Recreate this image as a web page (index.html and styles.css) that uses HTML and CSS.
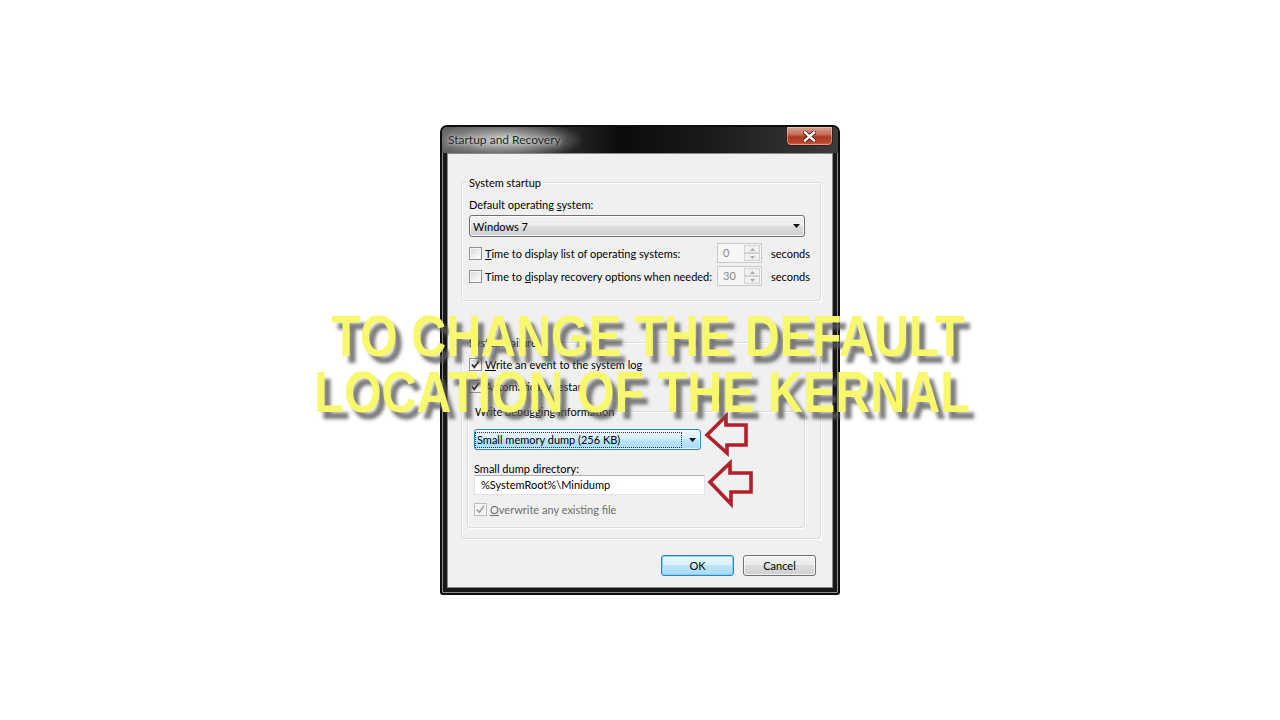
FILE: index.html
```html
<!DOCTYPE html>
<html>
<head>
<meta charset="utf-8">
<title>Startup and Recovery</title>
<link rel="stylesheet" href="styles.css">
</head>
<body>
<div class="window">
  <div class="titlebar">
    <div class="title">Startup and Recovery</div>
    <div class="close">
      <svg width="13" height="11" viewBox="0 0 13 11"><path d="M2 1.5 L11 9.5 M11 1.5 L2 9.5" stroke="#4a1a12" stroke-width="4.2" stroke-linecap="square"/><path d="M2 1.5 L11 9.5 M11 1.5 L2 9.5" stroke="#ffffff" stroke-width="2.4" stroke-linecap="square"/></svg>
    </div>
  </div>
  <div class="client">
    <div class="group g-startup">
      <div class="group-title">System startup</div>
      <div class="label lbl-default">Default operating <u>s</u>ystem:</div>
      <div class="combo combo-os">
        <span class="combo-text">Windows 7</span>
        <svg class="drop" width="7" height="4" viewBox="0 0 7 4"><polygon points="0,0 7,0 3.5,4" fill="#111"/></svg>
      </div>
      <div class="row row1">
        <div class="check-label"><span class="cb"></span><span><u>T</u>ime to display list of operating systems:</span></div>
        <div class="spin"><span class="spin-val">0</span><span class="spin-btns"><span class="sb"><svg width="5" height="3" viewBox="0 0 5 3"><polygon points="0,3 5,3 2.5,0" fill="#a9a9a9"/></svg></span><span class="sb"><svg width="5" height="3" viewBox="0 0 5 3"><polygon points="0,0 5,0 2.5,3" fill="#a9a9a9"/></svg></span></span></div>
        <span class="unit">seconds</span>
      </div>
      <div class="row row2">
        <div class="check-label"><span class="cb"></span><span>Time to <u>d</u>isplay recovery options when needed:</span></div>
        <div class="spin"><span class="spin-val">30</span><span class="spin-btns"><span class="sb"><svg width="5" height="3" viewBox="0 0 5 3"><polygon points="0,3 5,3 2.5,0" fill="#a9a9a9"/></svg></span><span class="sb"><svg width="5" height="3" viewBox="0 0 5 3"><polygon points="0,0 5,0 2.5,3" fill="#a9a9a9"/></svg></span></span></div>
        <span class="unit">seconds</span>
      </div>
    </div>

    <div class="group g-failure">
      <div class="group-title">System failure</div>
      <div class="check-row r-write"><span class="cb"><svg width="11" height="11" viewBox="0 0 11 11"><path d="M2 5.5 L4.3 8.3 L9 2" fill="none" stroke="#2b2b2b" stroke-width="1.7"/></svg></span><span><u>W</u>rite an event to the system log</span></div>
      <div class="check-row r-restart"><span class="cb"><svg width="11" height="11" viewBox="0 0 11 11"><path d="M2 5.5 L4.3 8.3 L9 2" fill="none" stroke="#2b2b2b" stroke-width="1.7"/></svg></span><span>Automatically <u>r</u>estart</span></div>
      <div class="group inner">
        <div class="group-title">Write debugging information</div>
        <div class="combo combo-focus">
          <span class="combo-text focus-rect">Small memory dump (256 KB)</span>
          <svg class="drop" width="7" height="4" viewBox="0 0 7 4"><polygon points="0,0 7,0 3.5,4" fill="#111"/></svg>
        </div>
        <div class="label lbl-dir">Small dump directory:</div>
        <div class="textbox">%SystemRoot%\Minidump</div>
        <div class="check-row r-over disabled"><span class="cb cb-dis"><svg width="11" height="11" viewBox="0 0 11 11"><path d="M2 5.5 L4.3 8.3 L9 2" fill="none" stroke="#a3a3a3" stroke-width="1.7"/></svg></span><span><u>O</u>verwrite any existing file</span></div>
      </div>
    </div>

    <div class="buttons">
      <button class="btn btn-default">OK</button>
      <button class="btn">Cancel</button>
    </div>
  </div>
</div>

<svg class="arrows" width="70" height="110" viewBox="695 405 70 110">
  <polygon points="707,435 726,416 726,425 746,425 746,445 727,445 727,453" fill="none" stroke="#b3202b" stroke-width="3.6" stroke-linejoin="miter"/>
  <polygon points="710,482 730,463 730,473 751,473 751,492 731,492 731,504" fill="none" stroke="#b3202b" stroke-width="3.6" stroke-linejoin="miter"/>
</svg>

<div class="caption">
  <div class="cap-line l1">TO CHANGE THE DEFAULT</div>
  <div class="cap-line l2">LOCATION OF THE KERNAL</div>
</div>
</body>
</html>
```

FILE: styles.css
```css
html, body {
  margin: 0;
  padding: 0;
}
body {
  width: 1280px;
  height: 720px;
  background: #ffffff;
  position: relative;
  overflow: hidden;
  display: flex;
  align-items: center;
  justify-content: center;
  font-family: "Lato", "Liberation Sans", sans-serif;
  font-size: 11px;
  color: #000;
}

/* window frame */
.window {
  width: 400px;
  height: 470px;
  box-sizing: border-box;
  border: 2px solid #0d0d0d;
  border-radius: 7px 7px 3px 3px;
  background: #171717;
  box-shadow: inset 0 0 0 1px #8d8d8d;
  padding: 0 5px 5px;
  display: flex;
  flex-direction: column;
}
.titlebar {
  height: 26px;
  margin: 0 -5px;
  padding: 0 5px;
  display: flex;
  justify-content: space-between;
  align-items: flex-start;
  border-radius: 5px 5px 0 0;
  background:
    radial-gradient(ellipse 80px 20px at 62px 13px, rgba(215,215,215,0.95), rgba(150,150,150,0.55) 65%, rgba(120,120,120,0) 100%),
    linear-gradient(90deg, #5a5a5a 0, #2a2a2a 30%, #0b0b0b 45%, #1c1c1c 70%, #3c3c3c 100%);
}
.title {
  padding-left: 1px;
  line-height: 26px;
  font-size: 12px;
  color: #262626;
  text-shadow: 0 0 6px #e0e0e0, 0 0 3px #d0d0d0;
}
.close {
  width: 47px;
  height: 19px;
  box-sizing: border-box;
  border: 1px solid #3b1a14;
  border-top: none;
  border-radius: 0 0 5px 5px;
  background: linear-gradient(#d9a293 0%, #c8705d 40%, #ad3b24 55%, #b9452b 85%, #cf6a4c 100%);
  box-shadow: inset 0 0 0 1px rgba(255,220,210,0.45);
  display: flex;
  align-items: center;
  justify-content: center;
}

/* client area */
.client {
  flex: 1;
  border: 1px solid #8a8a8a;
  background: #f0f0f0;
  display: flex;
  flex-direction: column;
}

.group {
  border: 1px solid #d5dfe5;
  border-radius: 3px;
  box-shadow: inset 1px 1px 0 #ffffff, 1px 1px 0 #ffffff;
}
.group-title {
  width: fit-content;
  margin: -8px 0 0 -2px;
  padding: 0 2px;
  line-height: 15px;
  background: #f0f0f0;
  white-space: nowrap;
}
.g-startup {
  margin: 28px 11px 0 13px;
  padding: 0 15px 14px 7px;
}
.g-failure {
  margin: 41px 11px 0 13px;
  padding: 0 15px 10px 7px;
}
.inner {
  margin: 17px 0 0 -2px;
  padding: 0 6px 10px 6px;
}
.inner .group-title {
  margin-left: -1px;
}

.label {
  line-height: 15px;
  white-space: nowrap;
}
.lbl-default { margin-top: 7px; }
.lbl-dir { margin-top: 12px; line-height: 13px; }

/* combo boxes */
.combo {
  box-sizing: border-box;
  display: flex;
  align-items: center;
  border: 1px solid #707070;
  border-radius: 3px;
  background: linear-gradient(#f2f2f2 0%, #ebebeb 50%, #dddddd 50%, #cfcfcf 100%);
  box-shadow: inset 0 0 0 1px rgba(255,255,255,0.75);
}
.combo-os {
  margin-top: 3px;
  height: 22px;
  padding-left: 3px;
}
.combo-focus {
  margin-top: 10px;
  width: 227px;
  height: 21px;
  padding-left: 1px;
  border-color: #3c7fb1;
  background: linear-gradient(#eaf6fd 0%, #d9f0fc 50%, #bee6fd 50%, #a7d9f5 100%);
}
.combo-text {
  white-space: nowrap;
  line-height: 15px;
}
.focus-rect {
  width: 204px;
  padding-left: 1px;
  outline: 1px dotted #333;
  outline-offset: 0;
  line-height: 14px;
}
.drop {
  margin-left: auto;
  margin-right: 4px;
}

/* rows with checkboxes */
.row {
  display: flex;
  align-items: center;
  height: 20px;
  white-space: nowrap;
}
.row1 { margin-top: 6px; }
.row2 { margin-top: 3px; }
.check-label {
  width: 248px;
  flex: none;
  display: flex;
  align-items: center;
  gap: 3px;
}
.check-row {
  display: flex;
  align-items: center;
  gap: 3px;
  height: 15px;
  white-space: nowrap;
}
.r-write { margin-top: 7px; }
.r-restart { margin-top: 7px; }
.r-over { margin-top: 7px; }
.disabled { color: #6d6d6d; }

.cb {
  width: 13px;
  height: 13px;
  box-sizing: border-box;
  flex: none;
  border: 1px solid #8e8f8f;
  background: linear-gradient(135deg, #d4d4d4 0%, #f2f2f2 60%, #ffffff 100%);
  box-shadow: inset 0 0 0 1px #f6f6f6;
  display: flex;
  align-items: center;
  justify-content: center;
}
.cb-dis {
  border-color: #bcbcbc;
  background: #f4f4f4;
}

/* spinners */
.spin {
  width: 45px;
  height: 20px;
  box-sizing: border-box;
  flex: none;
  border: 1px solid #c9c9c9;
  background: #f6f6f6;
  display: flex;
  align-items: stretch;
}
.spin-val {
  flex: 1;
  padding-left: 5px;
  line-height: 18px;
  color: #8a8a8a;
}
.spin-btns {
  width: 16px;
  display: flex;
  flex-direction: column;
  padding: 1px 1px 1px 0;
}
.sb {
  flex: 1;
  border: 1px solid #d2d2d2;
  background: #f0f0f0;
  display: flex;
  align-items: center;
  justify-content: center;
}
.unit {
  margin-left: 9px;
}

/* text box */
.textbox {
  width: 231px;
  height: 20px;
  box-sizing: border-box;
  border: 1px solid #e2e3ea;
  border-top-color: #abadb3;
  background: #ffffff;
  padding-left: 6px;
  line-height: 18px;
  white-space: nowrap;
}

/* buttons */
.buttons {
  margin-top: 16px;
  padding-right: 16px;
  display: flex;
  justify-content: flex-end;
  gap: 9px;
}
.btn {
  width: 73px;
  height: 21px;
  padding: 0;
  border: 1px solid #707070;
  border-radius: 3px;
  background: linear-gradient(#f2f2f2 0%, #ebebeb 50%, #dddddd 50%, #cfcfcf 100%);
  box-shadow: inset 0 0 0 1px rgba(255,255,255,0.75);
  font-family: "Lato", "Liberation Sans", sans-serif;
  font-size: 11px;
  color: #000;
}
.btn-default {
  border-color: #3c7fb1;
  background: linear-gradient(#eaf6fd 0%, #d9f0fc 50%, #bee6fd 50%, #a7d9f5 100%);
  box-shadow: inset 0 0 0 1px #7dd6f6;
}

/* overlays */
.arrows {
  position: absolute;
  left: 695px;
  top: 405px;
}
.caption {
  position: absolute;
  left: 0;
  top: 308px;
  width: 1280px;
  font-family: "Liberation Sans", Arial, sans-serif;
  font-weight: bold;
  font-size: 58px;
  line-height: 56px;
  color: #f8f86c;
  text-align: center;
  white-space: nowrap;
  text-shadow: 7px 7px 4px rgba(90,90,90,0.8);
}
.cap-line {
  transform: scaleX(0.835);
}
.l1 { padding-left: 19px; }
.l2 { padding-left: 5px; }
```
